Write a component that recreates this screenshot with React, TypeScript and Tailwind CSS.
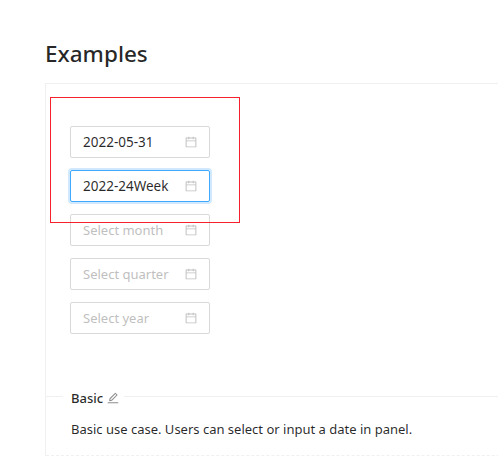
const calendarPath =
  'M880 184H712v-64c0-4.4-3.6-8-8-8h-56c-4.4 0-8 3.6-8 8v64H384v-64c0-4.4-3.6-8-8-8h-56c-4.4 0-8 3.6-8 8v64H144c-17.7 0-32 14.3-32 32v664c0 17.7 14.3 32 32 32h736c17.7 0 32-14.3 32-32V216c0-17.7-14.3-32-32-32zm-40 656H184V460h656v380zM184 392V256h128v48c0 4.4 3.6 8 8 8h56c4.4 0 8-3.6 8-8v-48h256v48c0 4.4 3.6 8 8 8h56c4.4 0 8-3.6 8-8v-48h128v136H184z'

const editPath =
  'M257.7 752c2 0 4-.2 6-.5L431.9 722c2-.4 3.9-1.3 5.3-2.8l423.9-423.9a9.96 9.96 0 0 0 0-14.1L694.9 114.9c-1.9-1.9-4.4-2.9-7.1-2.9s-5.2 1-7.1 2.9L256.8 538.8c-1.5 1.5-2.4 3.3-2.8 5.3l-29.5 168.2a33.5 33.5 0 0 0 9.4 29.8c6.6 6.4 14.9 9.9 23.8 9.9zm67.4-174.4L687.8 215l73.3 73.3-362.7 362.6-88.9 15.7 15.6-89zM880 836H144c-17.7 0-32 14.3-32 32v36c0 4.4 3.6 8 8 8h784c4.4 0 8-3.6 8-8v-36c0-17.7-14.3-32-32-32z'

function PickerIcon({ path, className }: { path: string; className: string }) {
  return (
    <svg viewBox="64 64 896 896" fill="currentColor" className={className}>
      <path d={path} />
    </svg>
  )
}

function DateField({ value, placeholder, focused }: { value?: string; placeholder?: string; focused?: boolean }) {
  return (
    <div
      className={`flex h-8 w-[140px] items-center justify-between rounded-[2px] border pl-3 pr-3 ${
        focused ? 'border-[#40a9ff] shadow-[0_0_0_2px_rgba(24,144,255,0.2)]' : 'border-[#d9d9d9]'
      }`}
    >
      <span className={`whitespace-nowrap ${value ? 'text-[13.5px] text-[#000000d9]' : 'text-[#bfbfbf]'}`}>{value ?? placeholder}</span>
      <PickerIcon path={calendarPath} className="h-3 w-3 shrink-0 text-[#00000040]" />
    </div>
  )
}

export default function App() {
  return (
    <div className="relative h-[464px] w-[498px] overflow-hidden bg-white text-[13px] leading-[22px] font-['Noto_Sans',sans-serif] text-[#000000d9]">
      <h2 className="pl-[45px] pt-[38px] text-[22.5px] leading-8 font-medium text-[#000000d9]">Examples</h2>
      <div className="ml-[45px] mt-[13px] w-[600px] border-l border-t border-[#f0f0f0]">
        <div className="flex flex-col gap-3 pl-6 pt-[42px] pb-[49px]">
          <DateField value="2022-05-31" />
          <DateField value="2022-24Week" focused />
          <DateField placeholder="Select month" />
          <DateField placeholder="Select quarter" />
          <DateField placeholder="Select year" />
        </div>
        <div className="flex items-center">
          <div className="h-px w-[17px] bg-[#f0f0f0]" />
          <div className="flex items-center gap-1 pl-2 pr-[5px] pt-1 font-medium">
            <span>Basic</span>
            <PickerIcon path={editPath} className="h-3 w-3 text-[#00000073]" />
          </div>
          <div className="h-px flex-1 bg-[#f0f0f0]" />
        </div>
        <p className="pl-[25px] pt-[9px] pb-[15px] whitespace-nowrap">Basic use case. Users can select or input a date in panel.</p>
        <div className="border-t border-dashed border-[#f0f0f0]" />
      </div>
      <div className="absolute left-[50px] top-[97px] h-[126px] w-[190px] border border-[#f5222d]" />
    </div>
  )
}
